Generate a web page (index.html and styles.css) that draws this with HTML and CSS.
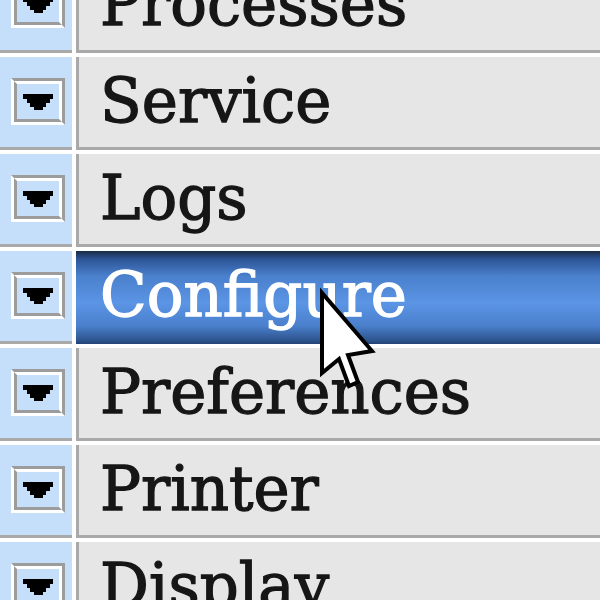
FILE: index.html
```html
<!DOCTYPE html>
<html lang="en">
<head>
<meta charset="utf-8">
<title>Menu</title>
<link rel="stylesheet" href="styles.css">
</head>
<body>
<div class="menu">
  <div class="row">
    <div class="handle"><div class="toggle"><div class="toggle-in"><svg class="tri" width="30" height="16" viewBox="0 0 30 16"><polygon points="0,0 30,0 30,5 26.5,5 26.5,9 23,9 23,13 19.5,13 19.5,16 10.5,16 10.5,13 7,13 7,9 3.5,9 3.5,5 0,5"/></svg></div></div></div>
    <div class="label">Processes</div>
  </div>
  <div class="row">
    <div class="handle"><div class="toggle"><div class="toggle-in"><svg class="tri" width="30" height="16" viewBox="0 0 30 16"><polygon points="0,0 30,0 30,5 26.5,5 26.5,9 23,9 23,13 19.5,13 19.5,16 10.5,16 10.5,13 7,13 7,9 3.5,9 3.5,5 0,5"/></svg></div></div></div>
    <div class="label">Service</div>
  </div>
  <div class="row">
    <div class="handle"><div class="toggle"><div class="toggle-in"><svg class="tri" width="30" height="16" viewBox="0 0 30 16"><polygon points="0,0 30,0 30,5 26.5,5 26.5,9 23,9 23,13 19.5,13 19.5,16 10.5,16 10.5,13 7,13 7,9 3.5,9 3.5,5 0,5"/></svg></div></div></div>
    <div class="label">Logs</div>
  </div>
  <div class="row active">
    <div class="handle"><div class="toggle"><div class="toggle-in"><svg class="tri" width="30" height="16" viewBox="0 0 30 16"><polygon points="0,0 30,0 30,5 26.5,5 26.5,9 23,9 23,13 19.5,13 19.5,16 10.5,16 10.5,13 7,13 7,9 3.5,9 3.5,5 0,5"/></svg></div></div></div>
    <div class="label">Configure</div>
  </div>
  <div class="row">
    <div class="handle"><div class="toggle"><div class="toggle-in"><svg class="tri" width="30" height="16" viewBox="0 0 30 16"><polygon points="0,0 30,0 30,5 26.5,5 26.5,9 23,9 23,13 19.5,13 19.5,16 10.5,16 10.5,13 7,13 7,9 3.5,9 3.5,5 0,5"/></svg></div></div></div>
    <div class="label">Preferences</div>
  </div>
  <div class="row">
    <div class="handle"><div class="toggle"><div class="toggle-in"><svg class="tri" width="30" height="16" viewBox="0 0 30 16"><polygon points="0,0 30,0 30,5 26.5,5 26.5,9 23,9 23,13 19.5,13 19.5,16 10.5,16 10.5,13 7,13 7,9 3.5,9 3.5,5 0,5"/></svg></div></div></div>
    <div class="label">Printer</div>
  </div>
  <div class="row">
    <div class="handle"><div class="toggle"><div class="toggle-in"><svg class="tri" width="30" height="16" viewBox="0 0 30 16"><polygon points="0,0 30,0 30,5 26.5,5 26.5,9 23,9 23,13 19.5,13 19.5,16 10.5,16 10.5,13 7,13 7,9 3.5,9 3.5,5 0,5"/></svg></div></div></div>
    <div class="label">Display</div>
  </div>
</div>
<svg class="cursor" width="70" height="110" viewBox="0 0 70 110">
  <polygon points="6,6 6,86 23,72 33,99 42,95 32,68 56,64" />
</svg>
</body>
</html>
```

FILE: styles.css
```css
html, body {
  margin: 0;
  padding: 0;
  background: #ffffff;
  width: 600px;
  height: 600px;
  overflow: hidden;
}

.menu {
  display: flex;
  flex-direction: column;
  gap: 4px;
  margin-top: -40px;
}

.row {
  display: grid;
  grid-template-columns: 72px 1fr;
  column-gap: 4px;
  height: 93px;
}

.handle {
  background: #c5defa;
  border-bottom: 3px solid #a9a9a9;
  display: flex;
  align-items: center;
  padding-left: 11px;
  padding-bottom: 1px;
}

.toggle {
  box-sizing: border-box;
  width: 54px;
  height: 47px;
  border: 3px solid;
  border-color: #9c9c9c #9c9c9c #ffffff #ffffff;
}

.toggle-in {
  box-sizing: border-box;
  width: 100%;
  height: 100%;
  border: 3px solid;
  border-color: #ffffff #ffffff #9c9c9c #9c9c9c;
  display: flex;
  align-items: center;
  justify-content: center;
}

.tri {
  display: block;
  shape-rendering: crispEdges;
  fill: #000000;
}

.label {
  background: #e6e6e6;
  border-left: 3px solid #a9a9a9;
  border-bottom: 3px solid #a9a9a9;
  padding-left: 21px;
  padding-bottom: 4px;
  display: flex;
  align-items: center;
  font-family: "DejaVu Serif", serif;
  font-size: 61px;
  line-height: 1;
  color: #161616;
  -webkit-text-stroke: 1.3px currentColor;
  white-space: nowrap;
  overflow: hidden;
}

.row.active .label {
  border: none;
  padding-left: 24px;
  padding-bottom: 7px;
  color: #ffffff;
  background: linear-gradient(to bottom,
    #1a2a44 0px,
    #2c5496 8px,
    #4a80cc 25px,
    #5b95e5 52px,
    #4a7fcc 75px,
    #2e5590 89px,
    #1e3866 95px);
}

.cursor {
  position: absolute;
  left: 316px;
  top: 287px;
}

.cursor polygon {
  fill: #ffffff;
  stroke: #000000;
  stroke-width: 4;
  stroke-linejoin: miter;
}
```
